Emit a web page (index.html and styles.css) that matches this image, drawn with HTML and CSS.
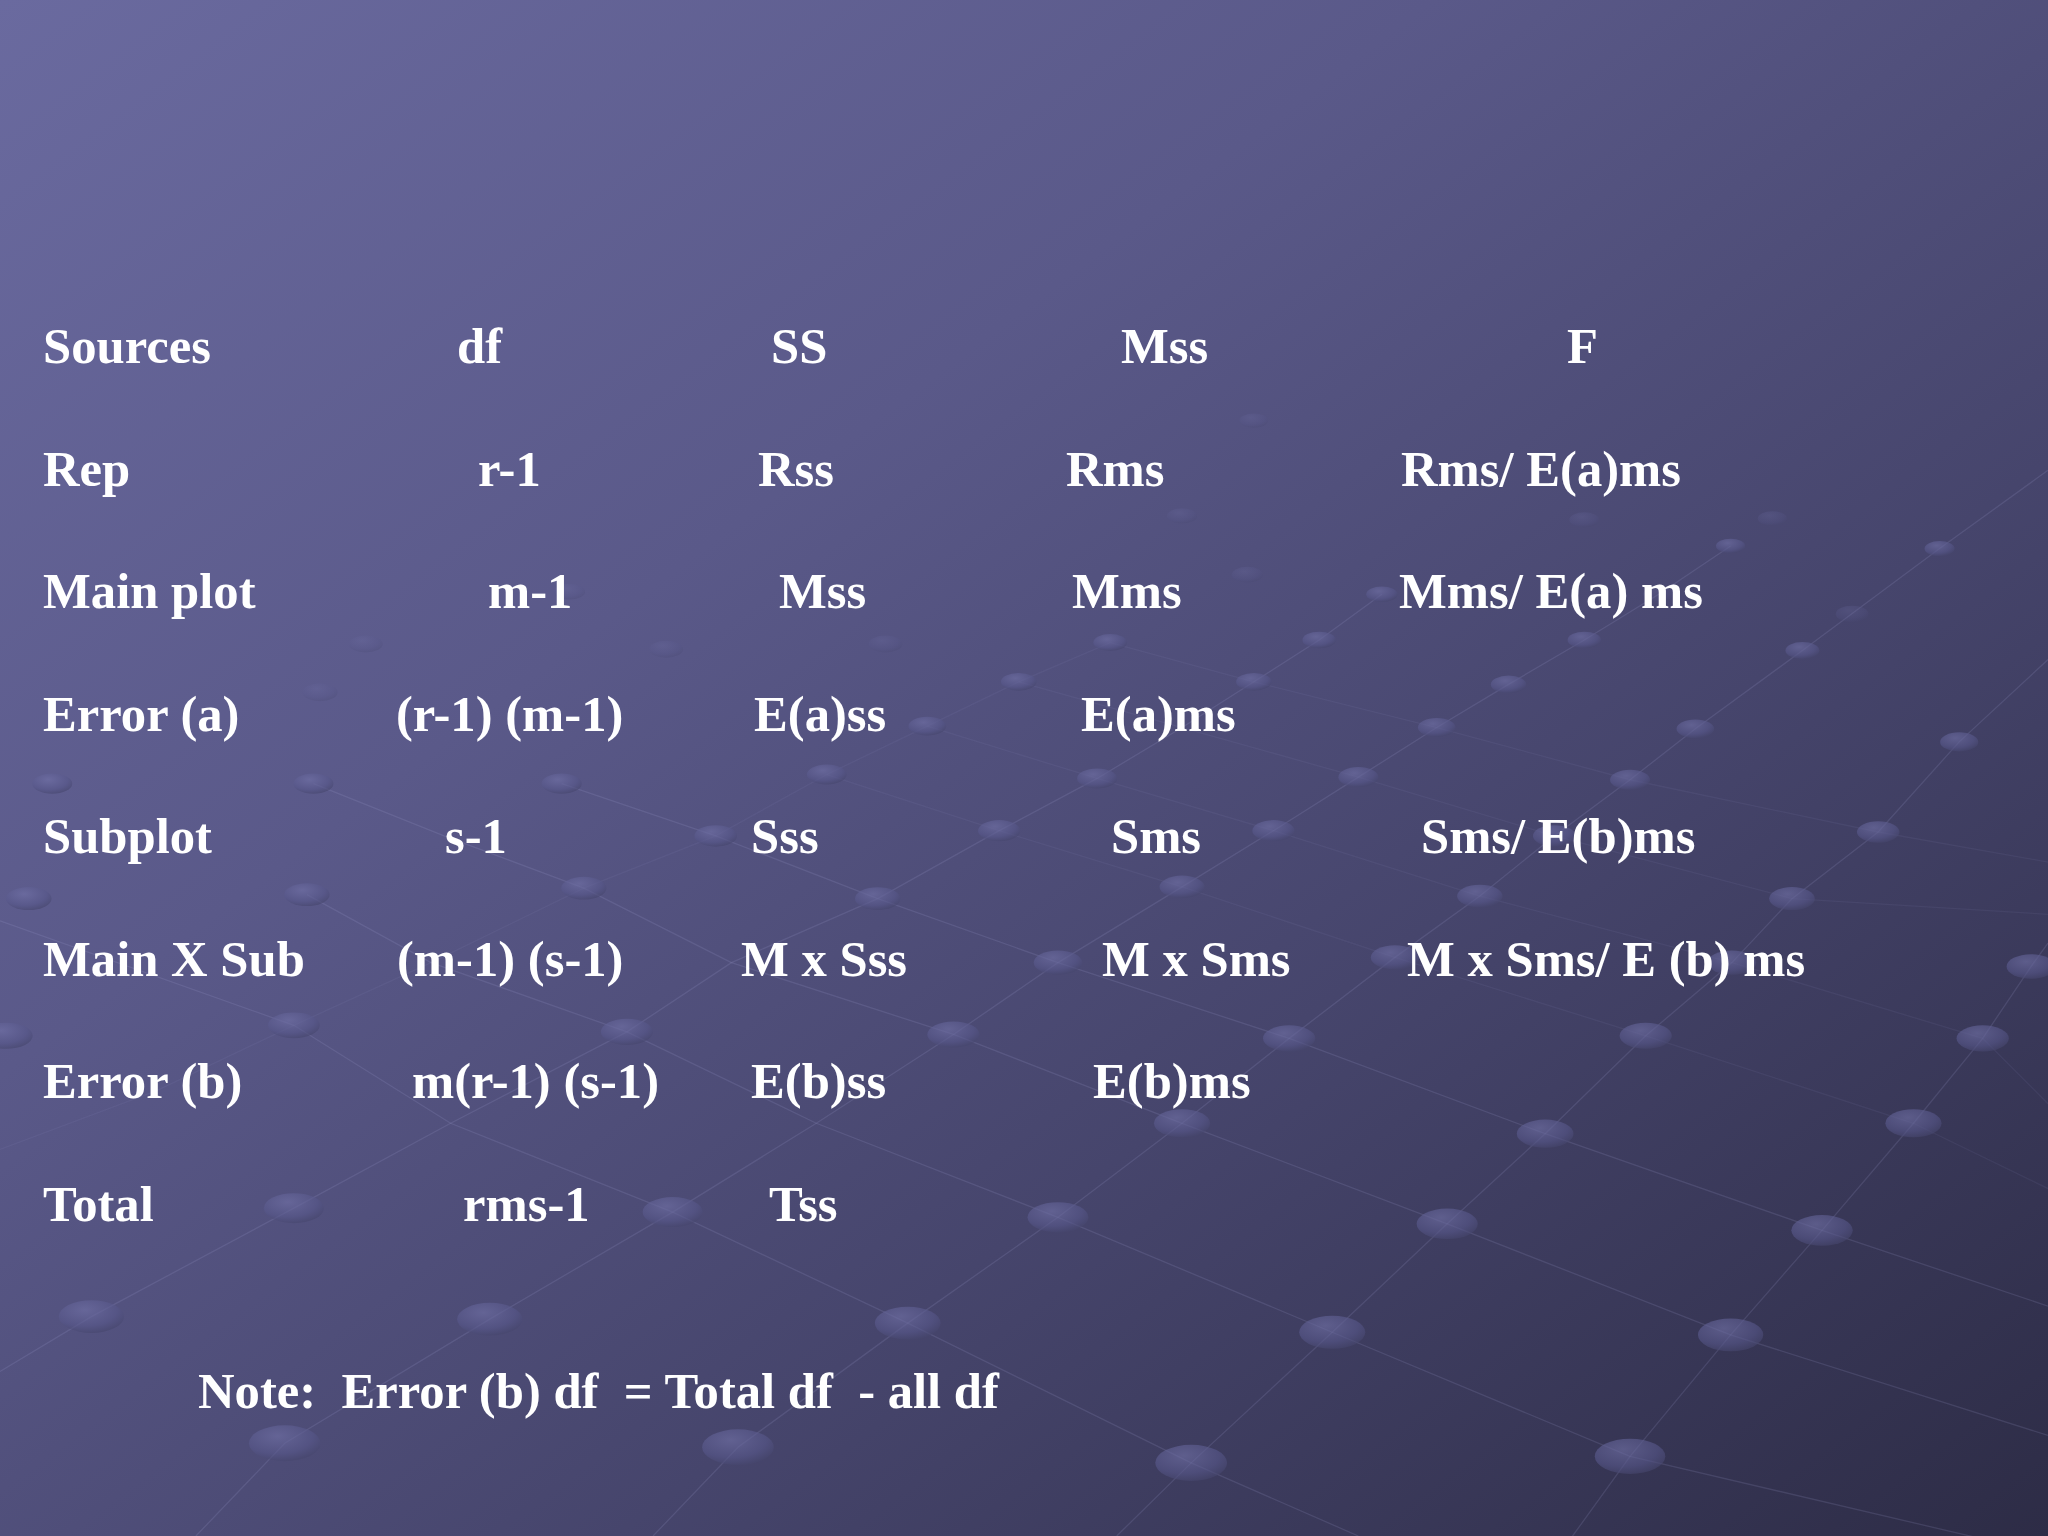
FILE: index.html
```html
<!DOCTYPE html>
<html lang="en">
<head>
<meta charset="utf-8">
<title>ANOVA – Split plot</title>
<link rel="stylesheet" href="styles.css">
</head>
<body>
<div class="slide">
  <svg class="bg" viewBox="0 0 1568 1176" preserveAspectRatio="none" aria-hidden="true">
    <defs>
      <radialGradient id="pearl" cx="40%" cy="30%" r="70%">
        <stop offset="0" stop-color="#7272a8"/>
        <stop offset="0.7" stop-color="#57578a"/>
        <stop offset="1" stop-color="#47476f"/>
      </radialGradient>
    </defs>
    <g class="strings">
      <polyline points="1204,1176 1248,1115 1325,1022 1395,942 1465,860 1518,795 1555,740 1568,722"/>
      <polyline points="855,1176 912,1120 1020,1020 1108,937 1183,868 1260,793 1326,737 1372,688 1438,637 1500,568 1568,505"/>
      <polyline points="500,1176 565,1108 695,1013 810,932 905,860 987,795 1068,733 1133,686 1190,640 1248,597 1298,558 1380,498 1485,420 1568,360"/>
      <polyline points="150,1176 218,1105 375,1010 515,928 625,860 730,792 810,737 905,679 975,636 1040,595 1100,557 1155,524 1213,490 1270,455 1325,418"/>
      <polyline points="0,1050 70,1008 225,925 345,860 480,790 560,737 672,688 765,636 840,596 905,557 960,522 1010,490 1058,455"/>
      <polyline class="faint" points="0,880 120,835 225,785 330,737 447,680 548,640 633,593 710,556 780,522 850,492"/>
      <polyline points="1568,1099 1325,1022 1108,937 905,860 730,792 560,737 447,680 340,640 240,600"/>
      <polyline points="1568,1190 1248,1115 1020,1020 810,932 625,860 480,790 330,737 235,685"/>
      <polyline points="1568,1000 1395,942 1183,868 987,795 810,737 672,688 548,640 430,600"/>
      <polyline points="1040,1176 912,1120 695,1013 515,928 345,860 225,785 0,705"/>
      <polyline class="faint" points="1568,910 1465,860 1260,793 1068,733 905,679 765,636 633,593"/>
      <polyline class="faint" points="1568,845 1518,795 1326,737 1133,686 975,636 840,596 710,556"/>
      <polyline class="faint" points="1568,700 1372,688 1190,640 1040,595 905,557 780,522"/>
      <polyline class="faint" points="1568,660 1438,637 1248,597 1100,557 960,522 850,492"/>
    </g>
    <g class="pearls">
      <ellipse cx="1248" cy="1115" rx="27" ry="13.5"/>
      <ellipse cx="1325" cy="1022" rx="25" ry="12.5"/>
      <ellipse cx="1395" cy="942" rx="23.5" ry="11.8"/>
      <ellipse cx="1465" cy="860" rx="21.5" ry="10.8"/>
      <ellipse cx="1518" cy="795" rx="20" ry="10"/>
      <ellipse cx="1555" cy="740" rx="18.7" ry="9.4"/>
      <ellipse cx="912" cy="1120" rx="27.5" ry="13.8"/>
      <ellipse cx="1020" cy="1020" rx="25.3" ry="12.6"/>
      <ellipse cx="1108" cy="937" rx="23.4" ry="11.7"/>
      <ellipse cx="1183" cy="868" rx="21.7" ry="10.8"/>
      <ellipse cx="1260" cy="793" rx="20" ry="10"/>
      <ellipse cx="1326" cy="737" rx="18.6" ry="9.3"/>
      <ellipse cx="1372" cy="688" rx="17.5" ry="8.8"/>
      <ellipse cx="1438" cy="637" rx="16.3" ry="8.2"/>
      <ellipse cx="1500" cy="568" rx="14.6" ry="7.3"/>
      <ellipse cx="565" cy="1108" rx="27.4" ry="13.7"/>
      <ellipse cx="695" cy="1013" rx="25.2" ry="12.6"/>
      <ellipse cx="810" cy="932" rx="23.3" ry="11.6"/>
      <ellipse cx="905" cy="860" rx="21.5" ry="10.8"/>
      <ellipse cx="987" cy="795" rx="20" ry="10"/>
      <ellipse cx="1068" cy="733" rx="18.5" ry="9.3"/>
      <ellipse cx="1133" cy="686" rx="17.4" ry="8.7"/>
      <ellipse cx="1190" cy="640" rx="16.3" ry="8.2"/>
      <ellipse cx="1248" cy="597" rx="15.3" ry="7.7"/>
      <ellipse cx="1298" cy="558" rx="14.4" ry="7.2"/>
      <ellipse cx="1380" cy="498" rx="13" ry="6.5"/>
      <ellipse cx="1485" cy="420" rx="11.5" ry="5.8"/>
      <ellipse cx="218" cy="1105" rx="27.4" ry="13.7"/>
      <ellipse cx="375" cy="1010" rx="25" ry="12.5"/>
      <ellipse cx="515" cy="928" rx="23" ry="11.5"/>
      <ellipse cx="730" cy="792" rx="20" ry="10"/>
      <ellipse cx="810" cy="737" rx="18.6" ry="9.3"/>
      <ellipse cx="905" cy="679" rx="17.2" ry="8.6"/>
      <ellipse cx="975" cy="636" rx="16.2" ry="8.1"/>
      <ellipse cx="1040" cy="595" rx="15.3" ry="7.7"/>
      <ellipse cx="1100" cy="557" rx="14.4" ry="7.2"/>
      <ellipse cx="1155" cy="524" rx="13.6" ry="6.8"/>
      <ellipse cx="1213" cy="490" rx="12.8" ry="6.4"/>
      <ellipse cx="1325" cy="418" rx="11.2" ry="5.6"/>
      <ellipse cx="70" cy="1008" rx="25" ry="12.5"/>
      <ellipse cx="225" cy="925" rx="23" ry="11.5"/>
      <ellipse cx="480" cy="790" rx="20" ry="10"/>
      <ellipse cx="672" cy="688" rx="17.4" ry="8.7"/>
      <ellipse cx="765" cy="636" rx="16.2" ry="8.1"/>
      <ellipse cx="840" cy="596" rx="15.3" ry="7.7"/>
      <ellipse cx="960" cy="522" rx="13.6" ry="6.8"/>
      <ellipse cx="1010" cy="490" rx="12.8" ry="6.4"/>
      <ellipse cx="1058" cy="455" rx="12" ry="6"/>
      <ellipse cx="225" cy="785" rx="19.8" ry="9.9"/>
      <ellipse cx="447" cy="680" rx="17.3" ry="8.7"/>
      <ellipse cx="548" cy="640" rx="16.3" ry="8.2"/>
      <ellipse cx="633" cy="593" rx="15.2" ry="7.6"/>
      <ellipse cx="710" cy="556" rx="14.4" ry="7.2"/>
      <ellipse cx="780" cy="522" rx="13.6" ry="6.8"/>
      <ellipse cx="850" cy="492" rx="12.9" ry="6.5"/>
      <ellipse cx="5" cy="793" rx="20" ry="10"/>
      <ellipse cx="22" cy="688" rx="17.5" ry="8.8"/>
      <ellipse cx="235" cy="685" rx="17.4" ry="8.7"/>
      <ellipse cx="430" cy="600" rx="15.4" ry="7.7"/>
      <ellipse cx="240" cy="600" rx="15.3" ry="7.7"/>
      <ellipse cx="40" cy="600" rx="15.3" ry="7.7"/>
    </g>
    <g class="pearls faint-pearls">
      <ellipse cx="678" cy="493" rx="12.9" ry="6.5"/>
      <ellipse cx="510" cy="497" rx="13" ry="6.5"/>
      <ellipse cx="436" cy="453" rx="12" ry="6"/>
      <ellipse cx="245" cy="530" rx="13.5" ry="6.8"/>
      <ellipse cx="280" cy="493" rx="13" ry="6.5"/>
      <ellipse cx="955" cy="440" rx="12" ry="6"/>
      <ellipse cx="905" cy="395" rx="11.5" ry="5.8"/>
      <ellipse cx="960" cy="322" rx="11" ry="5.5"/>
      <ellipse cx="1213" cy="398" rx="11.5" ry="5.8"/>
      <ellipse cx="1418" cy="470" rx="12.5" ry="6.3"/>
      <ellipse cx="1357" cy="397" rx="11.2" ry="5.6"/>
      <ellipse cx="1270" cy="455" rx="12" ry="6"/>
    </g>
  </svg>

  <div class="content">
    <div class="anova">
      <div class="row">
        <span class="cell">Sources</span>
        <span class="cell o63">df</span>
        <span class="cell o30">SS</span>
        <span class="cell o57">Mss</span>
        <span class="cell o168">F</span>
      </div>
      <div class="row">
        <span class="cell">Rep</span>
        <span class="cell o84">r-1</span>
        <span class="cell o17">Rss</span>
        <span class="cell o2">Rms</span>
        <span class="cell o2">Rms/ E(a)ms</span>
      </div>
      <div class="row">
        <span class="cell">Main plot</span>
        <span class="cell o94">m-1</span>
        <span class="cell o38">Mss</span>
        <span class="cell o8">Mms</span>
        <span class="cell o0">Mms/ E(a) ms</span>
      </div>
      <div class="row">
        <span class="cell">Error (a)</span>
        <span class="cell o2">(r-1) (m-1)</span>
        <span class="cell o13">E(a)ss</span>
        <span class="cell o17">E(a)ms</span>
        <span class="cell"></span>
      </div>
      <div class="row">
        <span class="cell">Subplot</span>
        <span class="cell o51">s-1</span>
        <span class="cell o10">Sss</span>
        <span class="cell o47">Sms</span>
        <span class="cell o22">Sms/ E(b)ms</span>
      </div>
      <div class="row">
        <span class="cell">Main X Sub</span>
        <span class="cell o3">(m-1) (s-1)</span>
        <span class="cell o0">M x Sss</span>
        <span class="cell o38">M x Sms</span>
        <span class="cell o8">M x Sms/ E (b) ms</span>
      </div>
      <div class="row">
        <span class="cell">Error (b)</span>
        <span class="cell o18">m(r-1) (s-1)</span>
        <span class="cell o10">E(b)ss</span>
        <span class="cell o29">E(b)ms</span>
        <span class="cell"></span>
      </div>
      <div class="row">
        <span class="cell">Total</span>
        <span class="cell o69">rms-1</span>
        <span class="cell o28">Tss</span>
        <span class="cell"></span>
        <span class="cell"></span>
      </div>
    </div>
    <p class="note">Note:  Error (b) df  = Total df  - all df</p>
  </div>
</div>
</body>
</html>
```

FILE: styles.css
```css
html, body {
  margin: 0;
  padding: 0;
  width: 100%;
  height: 100%;
  overflow: hidden;
}

body {
  font-family: "Liberation Serif", "Times New Roman", serif;
  color: #ffffff;
}

.slide {
  position: relative;
  width: 2048px;
  height: 1536px;
  overflow: hidden;
  background: linear-gradient(to bottom right, #6a6a9f 0%, #5a5989 35%, #46456c 65%, #2d2c46 100%);
}

.bg {
  position: absolute;
  inset: 0;
  width: 100%;
  height: 100%;
  pointer-events: none;
}

.strings polyline {
  fill: none;
  stroke: rgba(170, 170, 220, 0.16);
  stroke-width: 1;
}

.strings .faint {
  stroke: rgba(170, 170, 220, 0.08);
}

.pearls ellipse {
  fill: url(#pearl);
  opacity: 0.62;
}

.faint-pearls ellipse {
  opacity: 0.25;
}

.content {
  position: relative;
  padding: 285px 0 0 43px;
}

.anova {
  display: flex;
  flex-direction: column;
}

.row {
  display: grid;
  grid-template-columns: 351px 347px 323px 335px 560px;
  height: 122.5px;
  font-size: 50.67px;
  font-weight: bold;
  line-height: 122.5px;
  white-space: pre;
}

.o0 { padding-left: 0; }
.o2 { padding-left: 2px; }
.o3 { padding-left: 3px; }
.o8 { padding-left: 8px; }
.o10 { padding-left: 10px; }
.o13 { padding-left: 13px; }
.o17 { padding-left: 17px; }
.o18 { padding-left: 18px; }
.o22 { padding-left: 22px; }
.o28 { padding-left: 28px; }
.o29 { padding-left: 29px; }
.o30 { padding-left: 30px; }
.o38 { padding-left: 38px; }
.o47 { padding-left: 47px; }
.o51 { padding-left: 51px; }
.o57 { padding-left: 57px; }
.o63 { padding-left: 63px; }
.o69 { padding-left: 69px; }
.o84 { padding-left: 84px; }
.o94 { padding-left: 94px; }
.o168 { padding-left: 168px; }

.note {
  margin: 65px 0 0 155px;
  font-size: 50.67px;
  font-weight: bold;
  line-height: 122.5px;
  white-space: pre;
}
```
